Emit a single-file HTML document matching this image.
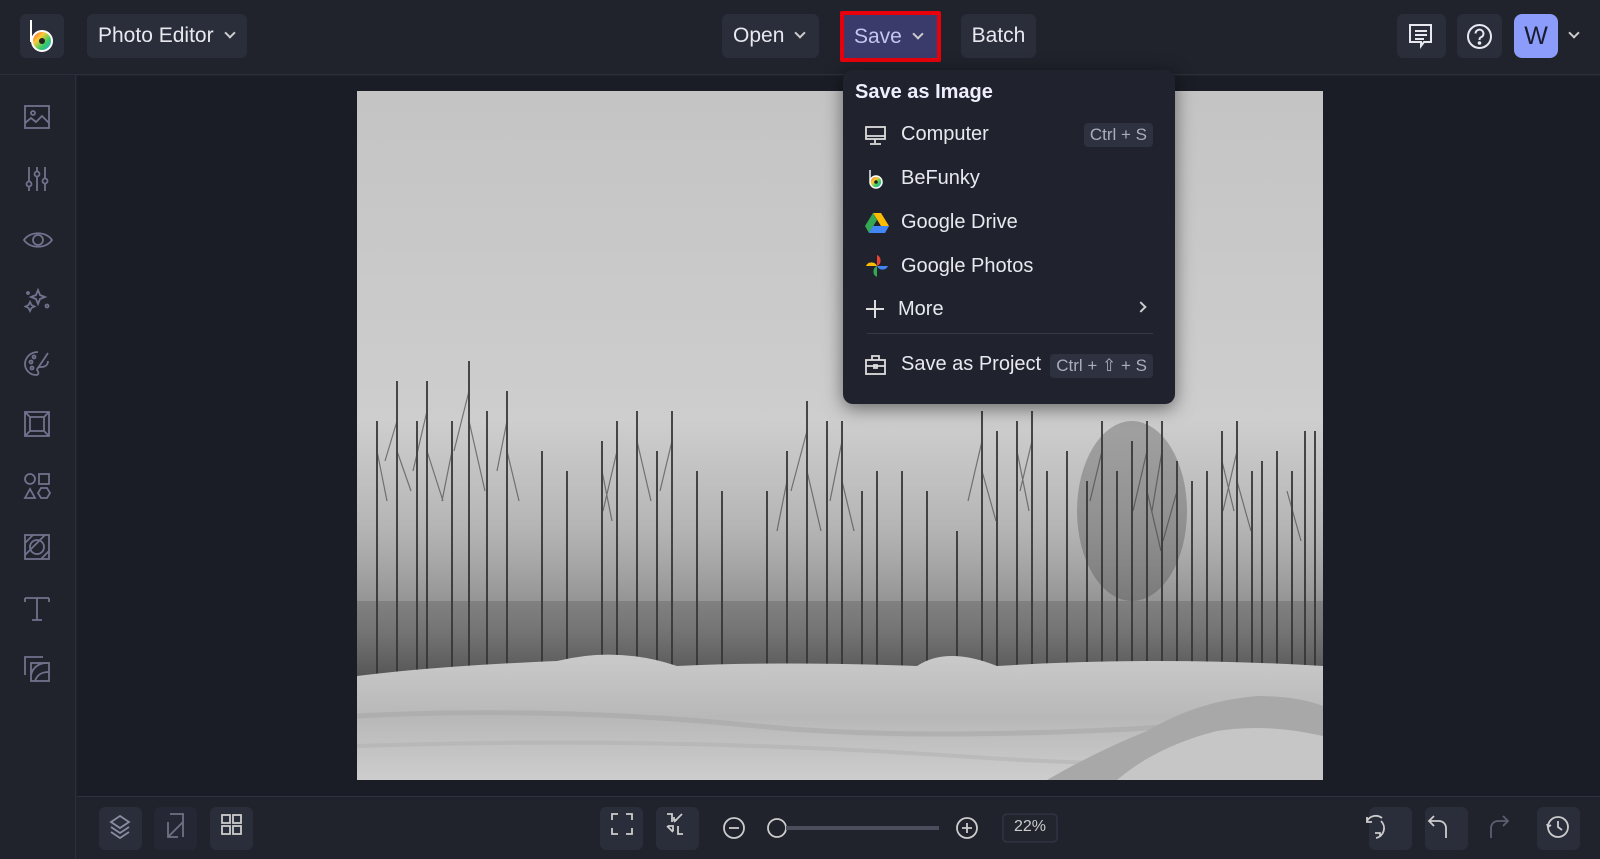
<!DOCTYPE html>
<html><head><meta charset="utf-8">
<style>
*{box-sizing:border-box;margin:0;padding:0}
body{width:1600px;height:859px;background:#20222c;font-family:"Liberation Sans",sans-serif;color:#e8e9ef;position:relative;overflow:hidden}
.top{position:absolute;left:0;top:0;width:1600px;height:75px;background:#20222c;border-bottom:1px solid #2c2f3b}
.side{position:absolute;left:0;top:75px;width:76px;height:784px;background:#20222c;border-right:1px solid #2c2f3b}
.canvas{position:absolute;left:77px;top:76px;width:1523px;height:720px;background:#1b1d26}
.bottom{position:absolute;left:77px;top:796px;width:1523px;height:63px;background:#20222c;border-top:1px solid #2e3140}
.btn{position:absolute;top:14px;height:44px;background:#2a2d3a;border-radius:6px;font-size:21px;line-height:44px;color:#e8e9ef}
.chev{display:inline-block;width:8px;height:8px;border-right:2px solid #ccc;border-bottom:2px solid #ccc;transform:rotate(45deg);margin-left:12px;position:relative;top:-5px}
.bb{position:absolute;top:807px;width:43px;height:43px;background:#2a2d3a;border-radius:6px}
.menu{position:absolute;left:843px;top:70px;width:332px;height:334px;background:#20222d;border-radius:10px;box-shadow:0 4px 18px rgba(0,0,0,.5)}
.mi{position:absolute;left:58px;font-size:20px;color:#e8e9ef}
.kb{position:absolute;right:22px;height:24px;background:#2e3140;border-radius:4px;font-size:17px;color:#a9adbd;line-height:24px;padding:0 6px}
</style></head><body>
<div class="top"></div>
<div class="side"></div>
<div class="canvas"></div>
<div class="bottom"></div>

<div style="position:absolute;left:20px;top:14px;width:44px;height:44px;background:#2a2d3a;border-radius:6px"></div>
<svg style="position:absolute;left:20px;top:14px" width="44" height="44" viewBox="0 0 44 44">
<defs><linearGradient id="lg" x1="0" y1="0" x2="1" y2="1"><stop offset="0" stop-color="#f33"/><stop offset=".35" stop-color="#fc3"/><stop offset=".65" stop-color="#3c6"/><stop offset="1" stop-color="#39f"/></linearGradient></defs>
<path d="M11 6 V28" stroke="#fff" stroke-width="2"/><circle cx="22" cy="27" r="10" fill="url(#lg)" stroke="#fff" stroke-width="2"/><circle cx="22" cy="27" r="3" fill="#222"/></svg>

<div class="btn" style="left:87px;width:160px;padding-left:11px">Photo Editor<span class="chev"></span></div>
<div class="btn" style="left:722px;width:97px;padding-left:11px">Open<span class="chev"></span></div>
<div class="btn" style="left:840px;top:11px;height:51px;width:101px;background:#3b3b6b;border:4px solid #e8000b;border-radius:2px;padding-left:10px;line-height:43px;color:#c4c6ee">Save<span class="chev"></span></div>
<div class="btn" style="left:961px;width:75px;text-align:center">Batch</div>

<div class="btn" style="left:1397px;width:49px"></div>
<svg style="position:absolute;left:1407px;top:22px" width="28" height="28" viewBox="0 0 28 28" fill="none" stroke="#e8e9ef" stroke-width="2"><path d="M3 3h21v17H17l-3 4v-4H3z"/><path d="M8 9h12M8 13h12M8 17h9"/></svg>
<div class="btn" style="left:1457px;width:45px"></div>
<svg style="position:absolute;left:1466px;top:23px" width="27" height="27" viewBox="0 0 27 27" fill="none" stroke="#e8e9ef" stroke-width="2"><circle cx="13.5" cy="13.5" r="11.5"/><path d="M9.5 10.5a4 4 0 1 1 5 4c-1 .4-1 1.2-1 2.5"/><circle cx="13.5" cy="20" r=".8" fill="#e8e9ef"/></svg>
<div style="position:absolute;left:1514px;top:14px;width:44px;height:44px;background:#8b9cfb;border-radius:8px;color:#1a1c30;font-size:25px;text-align:center;line-height:44px">W</div>
<span class="chev" style="position:absolute;left:1570px;top:29px;margin:0"></span>

<svg style="position:absolute;left:0;top:75px" width="76" height="620" fill="none" stroke="#70738d" stroke-width="1.8">
<g transform="translate(25,31)"><rect x="0" y="0" width="24" height="22"/><path d="M0 17l6-5 5 4 6-6 7 7"/><circle cx="8" cy="7" r="2"/></g>
<g transform="translate(25,92)"><path d="M4 0v24M12 0v24M20 0v24"/><circle cx="4" cy="17" r="2.5" fill="#20222c"/><circle cx="12" cy="7" r="2.5" fill="#20222c"/><circle cx="20" cy="14" r="2.5" fill="#20222c"/></g>
<g transform="translate(23,153)"><path d="M1 12c6-9 22-9 28 0c-6 9-22 9-28 0z"/><circle cx="15" cy="12" r="5"/></g>
<g transform="translate(24,213)"><path d="M14 2l2 5 5 2-5 2-2 5-2-5-5-2 5-2z"/><path d="M6 14l1.5 3 3 1.5-3 1.5-1.5 3-1.5-3-3-1.5 3-1.5z"/><circle cx="4" cy="5" r="1"/><circle cx="23" cy="18" r="1.5"/></g>
<g transform="translate(24,275)"><path d="M14 2C6 2 1 8 1 14s5 11 11 11c3 0 3-3 1-5 0-2 2-3 4-3 4 0 7-2 7-6"/><circle cx="7" cy="12" r="1.5"/><circle cx="10" cy="7" r="1.5"/><circle cx="8" cy="18" r="1.5"/><path d="M14 18l10-15"/></g>
<g transform="translate(25,337)"><rect x="0" y="0" width="24" height="24"/><rect x="5" y="5" width="14" height="14"/><path d="M0 0l5 5M24 0l-5 5M0 24l5-5M24 24l-5-5"/></g>
<g transform="translate(24,398)"><circle cx="6" cy="6" r="5"/><rect x="15" y="1" width="10" height="10"/><path d="M1 25l5-9 5 9z"/><path d="M17 15h6l3 5-3 5h-6l-3-5z"/></g>
<g transform="translate(25,460)"><rect x="0" y="0" width="24" height="24"/><circle cx="12" cy="12" r="7"/><path d="M0 8l8-8M16 24l8-8M0 20l20-20"/></g>
<g transform="translate(25,521)"><path d="M0 2h24M12 2v22M7 24h10M0 2v4M24 2v4"/></g>
<g transform="translate(25,582)"><rect x="6" y="6" width="18" height="18"/><path d="M0 18V0h18"/><path d="M6 18c2-8 8-12 16-12M10 24c2-6 6-9 14-9"/></g>
</svg>

<svg style="position:absolute;left:357px;top:91px" width="966" height="689" viewBox="0 0 966 689">
<defs>
<linearGradient id="sky" x1="0" y1="0" x2="0" y2="1"><stop offset="0" stop-color="#c4c4c4"/><stop offset=".6" stop-color="#d0d0d0"/><stop offset="1" stop-color="#cfcfcf"/></linearGradient>
<linearGradient id="band" x1="0" y1="0" x2="0" y2="1"><stop offset="0" stop-color="#777" stop-opacity="0"/><stop offset=".4" stop-color="#777" stop-opacity=".3"/><stop offset=".8" stop-color="#555" stop-opacity=".6"/><stop offset="1" stop-color="#3a3a3a" stop-opacity=".8"/></linearGradient>
<linearGradient id="snow" x1="0" y1="0" x2="0" y2="1"><stop offset="0" stop-color="#cacaca"/><stop offset=".5" stop-color="#b8b8b8"/><stop offset="1" stop-color="#cdcdcd"/></linearGradient>
</defs>
<rect width="966" height="689" fill="url(#sky)"/>
<rect y="330" width="966" height="260" fill="url(#band)"/>
<g stroke="#2e2e2e" stroke-width="2" fill="none" opacity=".85">
<path d="M20 330V590M40 290V590M60 330V590M70 290V590M95 330V590M112 270V590M130 320V590M150 300V590M185 360V590M210 380V590M245 350V590M260 330V590M280 320V590M300 360V590M315 320V590M340 380V590M365 400V590M410 400V590M430 360V590M450 310V590M470 330V590M485 330V590M505 400V590M520 380V590M545 380V590M570 400V590M600 440V590M625 320V590M640 340V590M660 330V590M675 320V590M690 380V590M710 360V590M730 390V590M745 330V590M760 380V590M775 350V590M790 330V590M805 330V590M820 370V590M835 390V590M850 380V590M865 340V590M880 330V590M895 380V590M905 370V590M920 360V590M935 380V590M948 340V590M958 340V590"/>
</g>
<g stroke="#444" stroke-width="1.2" fill="none" opacity=".65">
<path d="M40 330l-12 40M40 360l14 40M70 320l-14 60M70 360l16 50M112 300l-15 60M112 330l16 70M150 330l-10 50M150 360l12 50M260 360l-14 60M280 350l14 60M315 350l-12 50M450 340l-16 60M450 380l14 60M485 350l-12 60M485 390l12 50M625 350l-14 60M625 380l14 50M660 360l12 60M675 350l-12 50M790 360l-14 60M790 400l14 60M805 360l-10 60M880 360l-14 60M880 390l14 50M820 400l-14 50M930 400l14 50M745 360l-12 50M865 370l12 50M20 360l10 50M95 360l-10 50M245 380l10 50M430 390l-10 50"/>
</g>
<ellipse cx="775" cy="420" rx="55" ry="90" fill="#3c3c3c" opacity=".3"/>
<rect y="510" width="966" height="80" fill="#444" opacity=".25"/>
<path d="M0 585Q80 575 200 570Q260 555 320 575Q420 570 560 575Q590 555 640 575Q800 565 966 575V689H0z" fill="url(#snow)"/>
<path d="M0 625Q200 615 400 635T966 625" stroke="#a3a3a3" stroke-width="5" fill="none" opacity=".5"/>
<path d="M0 655Q300 645 600 665T966 655" stroke="#aaa" stroke-width="4" fill="none" opacity=".4"/>
<path d="M690 689Q740 660 790 640Q840 610 900 605Q940 605 966 615V689z" fill="#a8a8a8"/>
<path d="M760 689Q800 655 860 640Q910 632 966 645V689z" fill="#c6c6c6"/>
</svg>

<div class="menu">
<div style="position:absolute;left:12px;top:11px;font-size:20px;font-weight:bold;color:#eef">Save as Image</div>
<svg style="position:absolute;left:22px;top:55px" width="22" height="22" fill="none" stroke="#ddd" stroke-width="1.8"><rect x="1" y="2" width="19" height="12"/><path d="M1 11h19M10 14v4M5 19h11"/></svg>
<div class="mi" style="top:53px">Computer</div><div class="kb" style="top:53px">Ctrl + S</div>
<svg style="position:absolute;left:22px;top:97px" width="22" height="24"><path d="M5 3V14" stroke="#eee" stroke-width="1.5"/><circle cx="11" cy="15" r="6" fill="url(#lg)" stroke="#fff" stroke-width="1.5"/><circle cx="11" cy="15" r="1.8" fill="#222"/></svg>
<div class="mi" style="top:97px">BeFunky</div>
<svg style="position:absolute;left:22px;top:142px" width="24" height="22"><path d="M8 1h8l8 13h-8z" fill="#fbbc04"/><path d="M8 1L0 14l4 7 8-13z" fill="#34a853"/><path d="M4 21h16l4-7H8z" fill="#4285f4"/></svg>
<div class="mi" style="top:141px">Google Drive</div>
<svg style="position:absolute;left:22px;top:184px" width="24" height="24"><path d="M12 12V1a6 6 0 0 1 0 11z" fill="#ea4335"/><path d="M12 12h11a6 6 0 0 1-11 0z" fill="#4285f4"/><path d="M12 12v11a6 6 0 0 1 0-11z" fill="#34a853"/><path d="M12 12H1a6 6 0 0 1 11 0z" fill="#fbbc04"/></svg>
<div class="mi" style="top:185px">Google Photos</div>
<svg style="position:absolute;left:22px;top:229px" width="20" height="20" stroke="#ddd" stroke-width="2"><path d="M10 1v18M1 10h18"/></svg>
<div class="mi" style="top:228px;left:55px">More</div>
<span style="position:absolute;right:30px;top:233px;width:8px;height:8px;border-right:2px solid #ccc;border-top:2px solid #ccc;transform:rotate(45deg)"></span>
<div style="position:absolute;left:24px;right:22px;top:263px;border-top:1px solid #363948"></div>
<svg style="position:absolute;left:22px;top:284px" width="22" height="22" fill="none" stroke="#ddd" stroke-width="1.8"><rect x="1" y="6" width="19" height="14"/><path d="M7 6V2h7v4M1 12h19"/><rect x="9" y="11" width="3" height="3"/></svg>
<div class="mi" style="top:283px">Save as Project</div><div class="kb" style="top:284px">Ctrl + ⇧ + S</div>
</div>

<div class="bb" style="left:99px"></div><div class="bb" style="left:154px;background:#252834"></div><div class="bb" style="left:210px"></div>
<div class="bb" style="left:600px"></div><div class="bb" style="left:656px"></div>
<div class="bb" style="left:1369px"></div><div class="bb" style="left:1425px"></div><div class="bb" style="left:1537px"></div>
<svg style="position:absolute;left:0;top:796px" width="1600" height="63" fill="none" stroke="#ccc" stroke-width="1.8">
<path d="M120 20l-9 6 9 6 9-6zM111 31l9 6 9-6M111 36l9 6 9-6" stroke="#8a8da0"/>
<path d="M168 26v15h10M183 26v-8h-13M168 41l15-15M170 18h13v23" stroke="#6f7284"/>
<rect x="222" y="19" width="8" height="8"/><rect x="233" y="19" width="8" height="8"/><rect x="222" y="30" width="8" height="8"/><rect x="233" y="30" width="8" height="8"/>
<path d="M612 24v-6h6M632 24v-6h-6M612 32v6h6M632 32v6h-6"/>
<path d="M667 18h5v8M682 18l-8 8M677 24h-3v-3M667 30l6 6M668 30h5v5M683 38h-5v-8"/>
<circle cx="734" cy="32" r="10"/><path d="M729 32h10"/>
<circle cx="777" cy="32" r="9" fill="#20222c"/><path d="M786 32h153" stroke="#4a4d5c" stroke-width="4"/>
<circle cx="967" cy="32" r="10"/><path d="M962 32h10M967 27v10"/>
<rect x="1003" y="18" width="54" height="28" rx="4" stroke="#2e3140" fill="#22242e"/>
<path d="M1382 22a10 10 0 0 0-15 3M1376 42a10 10 0 0 0 5-17M1367 21v5h5M1380 41v-4h-5"/>
<path d="M1446 42v-10a7 7 0 0 0-7-7h-9M1434 20l-5 5 5 5"/>
<path d="M1491 42v-10a7 7 0 0 1 7-7h9M1503 20l5 5-5 5" stroke="#5c5f70"/>
<circle cx="1558" cy="31" r="10"/><path d="M1558 25v6l4 3M1547 28l1 3 3-2"/>
</svg>
<div style="position:absolute;left:1003px;top:818px;width:54px;font-size:16px;text-align:center;color:#ccc">22%</div>
</body></html>
